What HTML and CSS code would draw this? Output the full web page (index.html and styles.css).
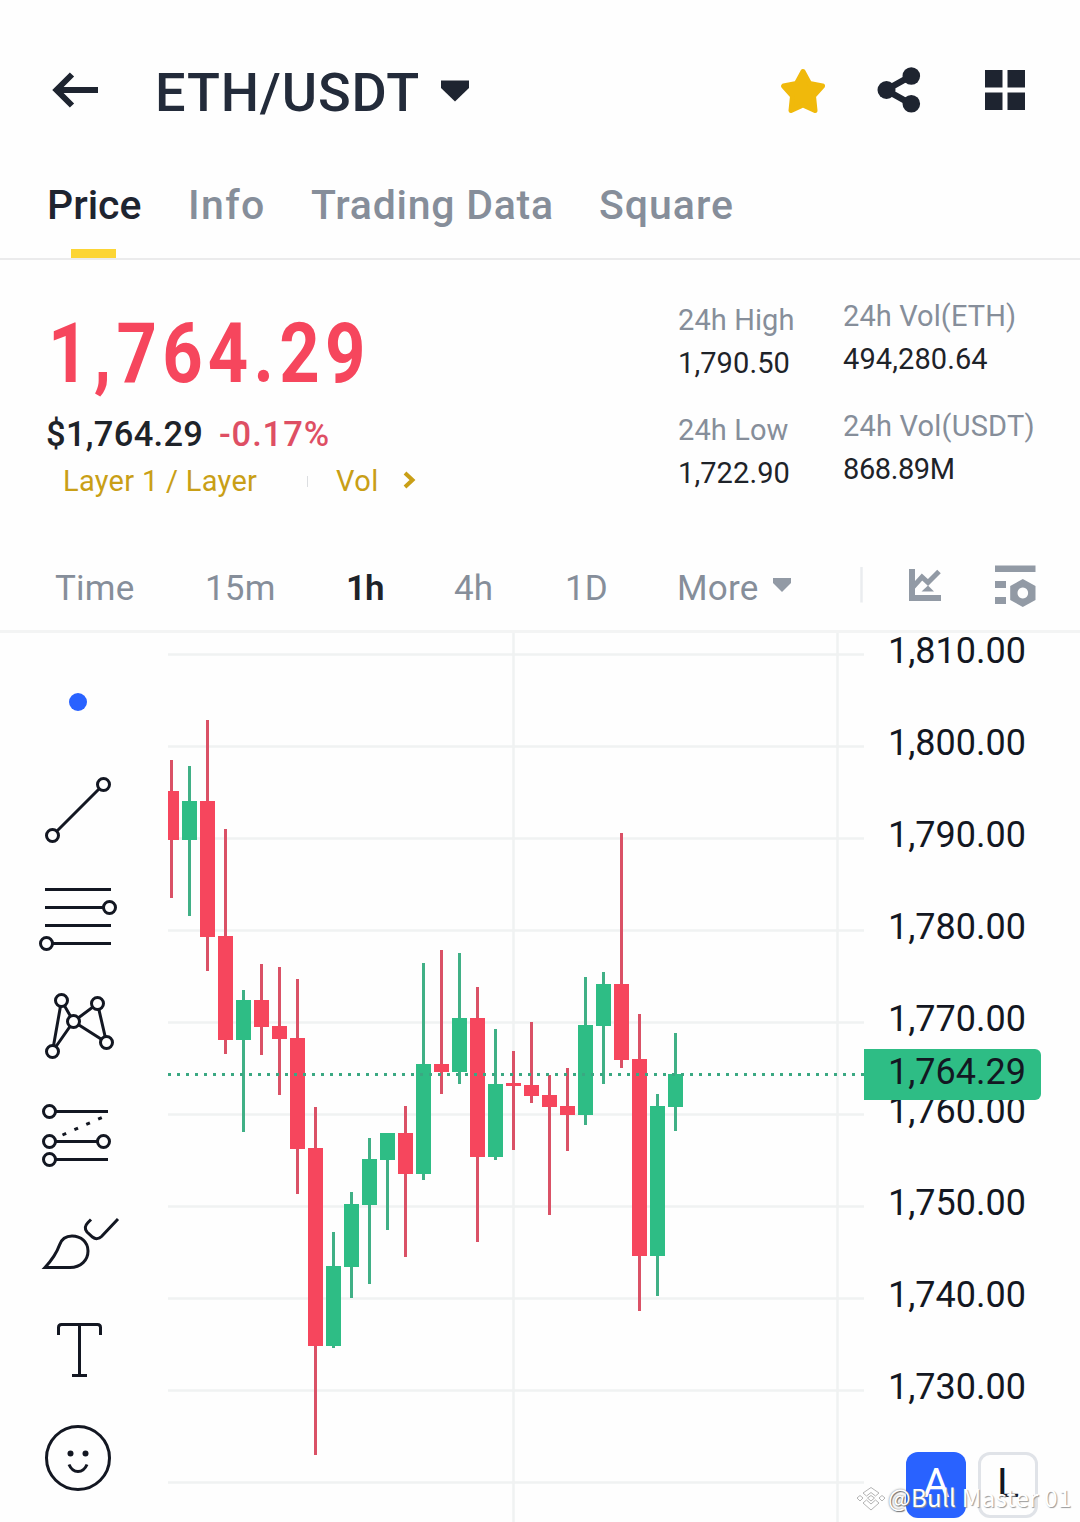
FILE: index.html
```html
<!DOCTYPE html>
<html lang="en">
<head>
<meta charset="utf-8">
<title>ETH/USDT</title>
<link rel="stylesheet" href="styles.css">
</head>
<body>
<header class="header">
  <svg class="back" viewBox="0 34 155 116"><path d="M98 90H57M72 74.500L56.500 90L72 105.500" fill="none" stroke="#1e2430" stroke-width="6"/></svg>
  <h1 class="pair">ETH/USDT</h1>
  <svg class="pair-caret" viewBox="437 34 40 116"><path d="M441 80.500H469V88L455 101.500L441 88Z" fill="#1e2430"/></svg>
  <svg class="actions" viewBox="770 34 270 116">
    <path d="M803 71.500L809.500 83.500L822.500 86L813.500 96L815 110.500L803 105L791 110.500L792.500 96L783.500 86L796.500 83.500Z" fill="#f0b90b" stroke="#f0b90b" stroke-width="5" stroke-linejoin="round"/>
    <g fill="#1e2430"><path d="M911 76L886 90L911 104" fill="none" stroke="#1e2430" stroke-width="6.500"/><circle cx="886.500" cy="90" r="9"/><circle cx="911.300" cy="76" r="8.800"/><circle cx="911.300" cy="103.700" r="8.800"/>
    <path d="M985 70h17.500v17.500h-17.500zM1007.500 70h17.500v17.500h-17.500zM985 92.500h17.500v17.500h-17.500zM1007.500 92.500h17.500v17.500h-17.500z"/></g>
  </svg>
</header>

<nav class="tabs">
  <a class="tab tab-price active">Price</a>
  <a class="tab tab-info">Info</a>
  <a class="tab tab-data">Trading Data</a>
  <a class="tab tab-square">Square</a>
</nav>

<section class="ticker">
  <div class="quote">
    <div class="last"><span>1,764.29</span></div>
    <div class="fiat"><span class="usd">$1,764.29</span><span class="change">-0.17%</span></div>
    <div class="tags"><span class="tag-layer">Layer 1 / Layer</span><i class="tag-sep"></i><span class="tag-vol">Vol</span>
      <svg class="chevron" viewBox="402 470 14 20"><path d="M404 472L411.500 479L404 486" fill="none" stroke="#c99f16" stroke-width="4"/></svg></div>
  </div>
  <dl class="stats stats-range">
    <div class="stat"><dt class="high">24h High</dt><dd>1,790.50</dd></div>
    <div class="stat"><dt class="low">24h Low</dt><dd>1,722.90</dd></div>
  </dl>
  <dl class="stats stats-volume">
    <div class="stat"><dt class="vol-eth">24h Vol(ETH)</dt><dd>494,280.64</dd></div>
    <div class="stat"><dt class="vol-usdt">24h Vol(USDT)</dt><dd class="compact">868.89M</dd></div>
  </dl>
</section>

<nav class="intervals">
  <a class="iv iv-time">Time</a><a class="iv iv-15m">15m</a><a class="iv iv-1h active">1h</a><a class="iv iv-4h">4h</a><a class="iv iv-1d">1D</a><a class="iv iv-more">More</a>
  <svg class="iv-icons" viewBox="772 545 308 85">
    <g fill="#929aa5"><path d="M773 578H791V583L782 592L773 583Z"/>
    <path d="M909 569h6v26h26v6h-32z"/><path d="M921.500 591.500L928 585.500L934 591.500Z"/>
    <path d="M995 565.500h40.500v6.500h-40.500zM995 581h11v7h-11zM995 597h11v7h-11z"/>
    <path fill-rule="evenodd" d="M1022.800 579L1035.500 586V600L1022.800 607L1010.200 600V586ZM1022.800 587.500a5.300 5.500 0 1 0 .01 0Z"/></g>
    <path d="M913 587L922 577L928 582.500L939 571.500" fill="none" stroke="#929aa5" stroke-width="5"/>
    <path d="M861.500 567V602.500" stroke="#eaecef" stroke-width="2.500"/>
  </svg>
</nav>

<main class="chart">
  <aside class="tools">
    <svg viewBox="0 633 168 117"><circle cx="78" cy="702" r="9" fill="#2962ff"/></svg>
    <svg class="ink" viewBox="0 750 168 115"><path d="M57 831L99 789"/><circle cx="52.500" cy="835.500" r="6"/><circle cx="103.500" cy="784.500" r="6"/></svg>
    <svg class="ink" viewBox="0 865 168 105"><path d="M45 889.500H111M45 907.500H103M45 925.500H111M53 943.500H111"/><circle cx="109.500" cy="907.500" r="6"/><circle cx="46.500" cy="943.500" r="6"/></svg>
    <svg class="ink" viewBox="0 970 168 110"><path d="M52.500 1051.500L61.500 1000.500L73.500 1021.500L97.500 1003.500L106.500 1042.500L73.500 1021.500Z"/><circle cx="61.500" cy="1000.500" r="6"/><circle cx="97.500" cy="1003.500" r="6"/><circle cx="73.500" cy="1021.500" r="6"/><circle cx="52.500" cy="1051.500" r="6"/><circle cx="106.500" cy="1042.500" r="6"/></svg>
    <svg class="ink" viewBox="0 1080 168 110"><path d="M56 1111.500H108M56 1141.500H97M56 1159.500H108"/><path d="M62.500 1135L103 1117" stroke-dasharray="4 9"/><circle cx="49.500" cy="1111.500" r="6"/><circle cx="49.500" cy="1141.500" r="6"/><circle cx="103.500" cy="1141.500" r="6"/><circle cx="49.500" cy="1159.500" r="6"/></svg>
    <svg class="ink" viewBox="0 1190 168 105"><path d="M45 1267.500H70C81 1267.500 88 1260 88 1251C88 1242 81 1236 72 1236C66 1236 61.500 1239 59.500 1245C57 1252 51 1261 45 1267.500Z"/><path d="M91 1219.500L88 1222.500C84.500 1226 84.500 1229 87 1232L92.500 1237C95.500 1239.500 99 1239 101.500 1236.500L118 1219"/></svg>
    <svg class="ink" viewBox="0 1295 168 110"><path d="M58.500 1335V1327.500Q58.500 1324.500 61.500 1324.500H97.500Q100.500 1324.500 100.500 1327.500V1335M79.500 1324.500V1375.500M72 1375.500H87"/></svg>
    <svg class="ink" viewBox="0 1405 168 117"><circle cx="78" cy="1458" r="31.500"/><path d="M69 1464.500Q72 1471.500 78 1471.500Q84 1471.500 87 1464.500"/><circle class="eye" cx="70.500" cy="1453.500" r="3"/><circle class="eye" cx="85.500" cy="1453.500" r="3"/></svg>
  </aside>

  <svg class="plot" viewBox="168 633 696 889">
    <path class="grid" d="M168 654.500H864M168 746.500H864M168 838.500H864M168 930.500H864M168 1022.500H864M168 1114.500H864M168 1206.500H864M168 1298.500H864M168 1390.500H864M168 1482.500H864M513.500 633V1522M837.500 633V1522"/>
    <path class="wick down" d="M171.500 760V898M207.500 720V971M225.500 829V1054M261.500 964V1055M279.500 967V1095M297.500 979V1194M315.500 1107V1455M405.500 1106V1257M441.500 950V1094M477.500 987V1242M513.500 1051V1150M531.500 1022V1103M549.500 1075V1215M567.500 1068V1151M621.500 833V1068M639.500 1014V1311"/>
    <path class="wick up" d="M189.500 766V916M243.500 990V1132M333.500 1232V1348M351.500 1192V1298M369.500 1138V1284M387.500 1133V1230M423.500 963V1180M459.500 953V1084M495.500 1029V1160M585.500 977V1125M603.500 972V1084M657.500 1094V1296M675.500 1033V1131"/>
    <path class="body down" d="M171.500 791V840M207.500 801V937M225.500 936V1040M261.500 1000V1027M279.500 1026V1039M297.500 1038V1149M315.500 1148V1346M405.500 1133V1174M441.500 1064V1072M477.500 1018V1157M513.500 1083V1086M531.500 1085V1096M549.500 1095V1107M567.500 1106V1115M621.500 984V1060M639.500 1059V1256"/>
    <path class="body up" d="M189.500 801V840M243.500 1000V1040M333.500 1266V1346M351.500 1204V1267M369.500 1159V1205M387.500 1133V1160M423.500 1064V1174M459.500 1018V1072M495.500 1084V1157M585.500 1025V1115M603.500 984V1026M657.500 1106V1256M675.500 1074V1107"/>
    <path class="price-line" d="M168 1074.500H864"/>
  </svg>

  <div class="axis">
    <span>1,810.00</span><span>1,800.00</span><span>1,790.00</span><span>1,780.00</span><span>1,770.00</span><span>1,760.00</span><span>1,750.00</span><span>1,740.00</span><span>1,730.00</span>
    <div class="scale"><b class="auto">A</b><b class="log">L</b></div>
    <div class="price-tag">1,764.29</div>
  </div>
  <div class="watermark">
    <svg class="wm-logo" viewBox="856 1488 30 27"><path d="M863 1495L871 1489.500L879 1495L875.500 1498L871 1494.500L866.500 1498ZM857 1500L860 1497.500L863 1500L860 1503ZM867.500 1500L871 1497.500L874.500 1500L871 1503ZM879 1500L882 1497.500L885 1500L882 1503ZM863 1505L866.500 1502L871 1506L875.500 1502L879 1505L871 1512Z"/></svg>
    <span class="wm-at">@</span><span class="wm-name">Bull Master 01</span>
  </div>
</main>
</body>
</html>
```
FILE: styles.css
```css
* { box-sizing: border-box; }
body {
  margin: 0;
  width: 1080px;
  height: 1522px;
  overflow: hidden;
  background: #fefefe;
  color: #1e2329;
  font-family: Roboto, "Liberation Sans", sans-serif;
  white-space: nowrap;
}
svg { display: block; flex: none; }
h1, dl, dd, dt { margin: 0; font-weight: 400; }

.header { display: flex; align-items: center; height: 150px; padding-top: 34px; }
.back { width: 155px; height: 116px; }
.pair { width: 282px; font-size: 54px; line-height: 117px; font-weight: 500; letter-spacing: 0.85px; color: #232b3a; }
.pair-caret { width: 40px; height: 116px; }
.actions { width: 270px; height: 116px; margin-left: 293px; }

.tabs {
  display: flex;
  gap: 45px;
  height: 110px;
  padding-left: 47px;
  border-bottom: 2px solid #ebebec;
  font-size: 41px;
  font-weight: 500;
  line-height: 110px;
  color: #868e9a;
}
.tab { display: block; height: 108px; }
.tab.active { color: #1e2430; background: linear-gradient(#fcd535, #fcd535) 24px 99px / 45px 9px no-repeat; }
.tab-price { width: 96px; }
.tab-info { width: 78px; letter-spacing: 1.4px; }
.tab-data { width: 243px; letter-spacing: 0.75px; }
.tab-square { width: 136px; letter-spacing: 1px; }

.ticker { display: flex; height: 285px; }
.quote { width: 678px; padding: 43px 0 0 46px; }
.last { height: 100px; padding-left: 2px; line-height: 101px; font-size: 83px; font-weight: 700; color: #f6465d; }
.last span { display: inline-block; transform: scaleX(0.85); transform-origin: 0 50%; letter-spacing: 6.2px; }
.fiat { display: flex; height: 62px; line-height: 62px; font-size: 34.5px; font-weight: 500; }
.usd { width: 173px; letter-spacing: 0.3px; }
.change { color: #de4f64; letter-spacing: 0.9px; }
.tags { display: flex; align-items: center; height: 32px; padding-left: 17px; font-size: 29px; color: #c99f16; }
.tag-layer { width: 244px; letter-spacing: 0.3px; }
.tag-sep { width: 1px; height: 11px; background: #dcdee1; }
.tag-vol { width: 67px; padding-left: 28px; box-sizing: content-box; letter-spacing: 0.4px; }
.chevron { width: 14px; height: 20px; }
.stats { font-size: 29px; letter-spacing: 0.1px; }
.stats-range { width: 165px; padding-top: 39px; }
.stats-volume { padding-top: 35px; }
.stat { height: 110px; }
.stat dt { height: 42px; line-height: 42px; color: #868e9a; }
.stat dd { height: 43px; line-height: 45px; }
.vol-usdt { letter-spacing: 0.2px; }
.compact { letter-spacing: -0.4px; }

.intervals {
  display: flex;
  height: 88px;
  padding-left: 55px;
  border-bottom: 3px solid #f3f4f4;
  font-size: 35px;
  line-height: 87px;
  letter-spacing: 0.2px;
  color: #868e9a;
}
.iv.active { color: #1e2329; font-weight: 600; letter-spacing: -1px; }
.iv-time { width: 150px; }
.iv-15m { width: 141px; }
.iv-1h { width: 108px; }
.iv-4h { width: 111px; }
.iv-1d { width: 112px; }
.iv-more { width: 95px; }
.iv-icons { width: 308px; height: 85px; }

.chart { position: relative; display: flex; height: 889px; }
.tools { width: 168px; }
.ink { fill: #fefefe; stroke: #131722; stroke-width: 3; }
.ink path { fill: none; }
.ink .eye { fill: #131722; stroke: none; }
.plot { width: 696px; height: 889px; }
.plot path { fill: none; }
.grid { stroke: #f0f2f2; stroke-width: 2.5; }
.wick { stroke-width: 3; }
.body { stroke-width: 15; }
.plot .wick.down { stroke: #da5166; }
.plot .wick.up { stroke: #40b086; }
.body.down { stroke: #f6465d; }
.body.up { stroke: #2ebd85; }
.price-line { stroke: #3aa882; stroke-width: 3; stroke-dasharray: 3 6; }

.axis { position: relative; width: 216px; font-size: 36px; color: #131722; }
.axis span { display: block; height: 92px; padding-left: 24px; line-height: 36px; }
.price-tag {
  position: absolute;
  left: 0;
  top: 416px;
  width: 177px;
  height: 51px;
  padding-left: 24px;
  border-radius: 0 6px 6px 0;
  background: #2ebd85;
  line-height: 46px;
}
.scale { display: flex; gap: 12px; margin: -9px 0 0 42px; }
.scale b { width: 60px; height: 66px; border-radius: 12px; font-size: 41px; font-weight: 400; line-height: 62px; text-align: center; }
.auto { background: #2962ff; color: #fff; }
.scale .log { border: 3px solid #e0e3e8; line-height: 56px; }

.watermark {
  position: absolute;
  left: 856px;
  top: 846px;
  display: flex;
  align-items: center;
  height: 36px;
  color: #fff;
  font: 24px/36px "Noto Sans CJK SC", "Noto Sans", sans-serif;
  text-shadow: 1px 1px 1px #989898;
}
.wm-logo { width: 30px; height: 27px; margin-top: 5px; fill: #fff; stroke: #b4b4b4; stroke-width: 1; }
.wm-at { width: 25px; padding-left: 2px; text-shadow: 0 0 2px #666, 1px 1px 1px #777; }
.wm-name { letter-spacing: 0.3px; }
```
